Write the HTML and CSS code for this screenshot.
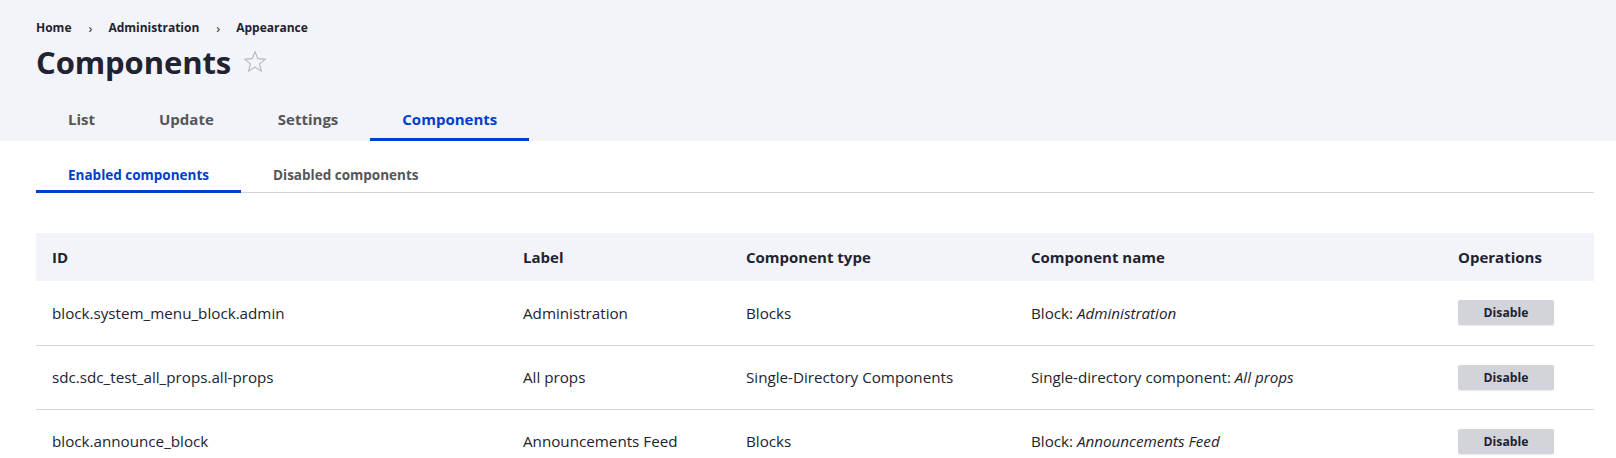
FILE: index.html
```html
<!DOCTYPE html>
<html lang="en">
<head>
<meta charset="utf-8">
<title>Components</title>
<link rel="stylesheet" href="styles.css">
</head>
<body>
<header class="page-header">
  <nav class="breadcrumb">
    <a href="#">Home</a>
    <span class="sep">›</span>
    <a href="#">Administration</a>
    <span class="sep">›</span>
    <a href="#">Appearance</a>
  </nav>
  <div class="title-row">
    <h1 class="page-title">Components</h1>
    <svg class="star" viewBox="0 0 24 24" width="24" height="23" aria-hidden="true">
      <path d="M12 1.8l2.95 7.2 7.75.55-5.95 4.95 1.9 7.55L12 17.85 5.35 22.05l1.9-7.55L1.3 9.55 9.05 9z" fill="none" stroke="#b4b5ba" stroke-width="1.1" stroke-linejoin="miter"/>
    </svg>
  </div>
  <ul class="tabs">
    <li><a class="tab" href="#">List</a></li>
    <li><a class="tab" href="#">Update</a></li>
    <li><a class="tab" href="#">Settings</a></li>
    <li><a class="tab is-active" href="#">Components</a></li>
  </ul>
</header>
<main class="content">
  <ul class="subtabs">
    <li><a class="subtab is-active" href="#">Enabled components</a></li>
    <li><a class="subtab" href="#">Disabled components</a></li>
  </ul>
  <table class="listing">
    <colgroup>
      <col class="c-id"><col class="c-label"><col class="c-type"><col class="c-name"><col class="c-ops">
    </colgroup>
    <thead>
      <tr><th>ID</th><th>Label</th><th>Component type</th><th>Component name</th><th>Operations</th></tr>
    </thead>
    <tbody>
      <tr>
        <td>block.system_menu_block.admin</td>
        <td>Administration</td>
        <td>Blocks</td>
        <td>Block: <em>Administration</em></td>
        <td><button class="btn" type="button">Disable</button></td>
      </tr>
      <tr>
        <td>sdc.sdc_test_all_props.all-props</td>
        <td>All props</td>
        <td>Single-Directory Components</td>
        <td>Single-directory component: <em>All props</em></td>
        <td><button class="btn" type="button">Disable</button></td>
      </tr>
      <tr>
        <td>block.announce_block</td>
        <td>Announcements Feed</td>
        <td>Blocks</td>
        <td>Block: <em>Announcements Feed</em></td>
        <td><button class="btn" type="button">Disable</button></td>
      </tr>
    </tbody>
  </table>
</main>
</body>
</html>
```
FILE: styles.css
```css
* { box-sizing: border-box; }
html, body { margin: 0; padding: 0; }
body {
  font-family: "Open Sans", "Liberation Sans", sans-serif;
  color: #222330;
  background: #fff;
  font-size: 15px;
}
a { text-decoration: none; color: inherit; }
ul { list-style: none; margin: 0; padding: 0; }

.page-header {
  background: #f3f4f9;
  padding: 19px 22px 0 36px;
}
.breadcrumb {
  display: flex;
  align-items: center;
  font-size: 12px;
  font-weight: 700;
  line-height: 18px;
  color: #222330;
}
.breadcrumb .sep {
  margin: 0 16px 0 17px;
  font-weight: 400;
  font-size: 13px;
}
.title-row {
  display: flex;
  align-items: center;
  margin-top: 3px;
  height: 44px;
}
.page-title {
  margin: 0;
  font-size: 31px;
  font-weight: 700;
  line-height: 40px;
  letter-spacing: -0.1px;
}
.star { margin-left: 12px; margin-top: -1px; }

.tabs {
  display: flex;
  margin-top: 9px;
}
.tab {
  display: block;
  height: 48px;
  line-height: 52px;
  padding: 0 32px;
  font-size: 15px;
  font-weight: 700;
  color: #55565b;
  border-bottom: 3px solid transparent;
}
.tab.is-active {
  color: #003ecc;
  border-bottom-color: #003ecc;
}

.content {
  padding: 0 22px 0 36px;
}
.subtabs {
  display: flex;
  margin-top: 12px;
  box-shadow: inset 0 -1px 0 #d3d4d9;
}
.subtab {
  display: block;
  height: 40px;
  line-height: 44px;
  padding: 0 32px;
  font-size: 13.5px;
  font-weight: 700;
  color: #55565b;
  border-bottom: 3px solid transparent;
}
.subtab.is-active {
  color: #003ecc;
  border-bottom-color: #003ecc;
}

.listing {
  width: 100%;
  margin-top: 40px;
  border-collapse: collapse;
  table-layout: fixed;
}
.c-id { width: 471px; }
.c-label { width: 223px; }
.c-type { width: 285px; }
.c-name { width: 427px; }
.c-ops { width: 152px; }
.listing th {
  background: #f3f4f9;
  height: 48px;
  padding: 0 16px;
  text-align: left;
  font-size: 15px;
  font-weight: 700;
}
.listing td {
  height: 64px;
  padding: 0 16px;
  font-size: 15.2px;
  border-bottom: 1px solid #d3d4d9;
  white-space: nowrap;
}
.listing em { font-style: italic; }
.btn {
  font-family: inherit;
  font-size: 12.2px;
  font-weight: 700;
  color: #222330;
  background: #d3d4d9;
  border: 0;
  border-radius: 2px;
  height: 25px;
  width: 96px;
  padding: 0;
  box-shadow: 0 1px 1px rgba(0,0,0,0.08);
  cursor: pointer;
}
```
